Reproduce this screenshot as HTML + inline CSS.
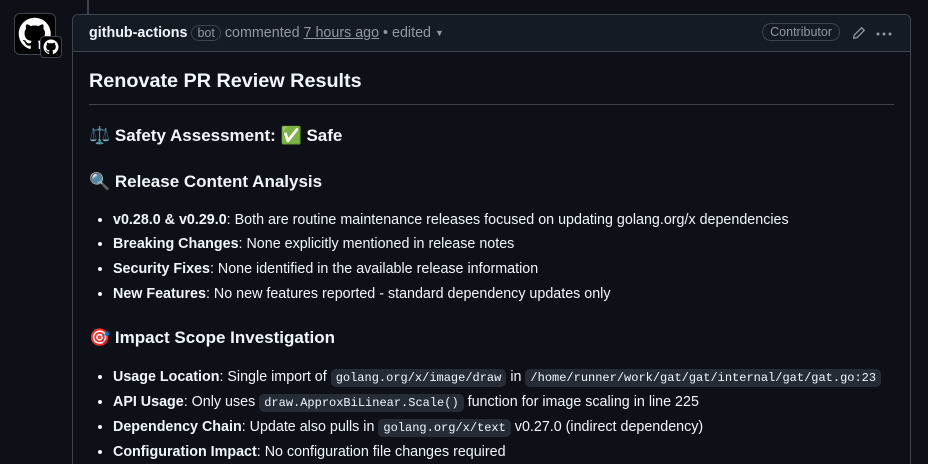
<!DOCTYPE html>
<html><head><style>
html,body{margin:0;height:464px;overflow:hidden}
body{background:#0d1117;width:928px;font-family:"Liberation Sans",sans-serif;color:#f0f6fc;position:relative}
.line{position:absolute;left:87px;top:0;width:2px;height:14px;background:#3d444d}
.av{position:absolute;left:14px;top:13px;width:40px;height:40px;background:#000;border:1px solid #3d444d;border-radius:6px}
.av2{position:absolute;left:40px;top:36px;width:20px;height:20px;background:#000;border:1px solid #3d444d;border-radius:4px}
.card{position:absolute;left:72px;top:14px;width:837px;height:460px;border:1px solid #3d444d;border-radius:6px;overflow:hidden}
.hd{height:36px;background:#151b23;border-bottom:1px solid #3d444d;display:flex;align-items:center;padding-left:16px;font-size:14.3px;color:#9198a1;white-space:nowrap}
.hd b{color:#f0f6fc}
.bot{border:1px solid #3d444d;border-radius:10px;padding:0 5px;font-size:12.5px;margin:0 4px}
.contrib{position:absolute;right:70px;top:8px;border:1px solid #3d444d;border-radius:10px;padding:1px 7px;font-size:12.5px;color:#9198a1}
.bd{padding:0 16px}
h1{font-size:19.8px;margin:0;padding:17px 0 9px;border-bottom:1px solid #3d444d;line-height:1.3}
h3{font-size:17px;margin:0;line-height:24px}
ul{margin:0;padding-left:24px;font-size:14.3px}
li{line-height:24.7px;height:24.7px;white-space:nowrap}
code{font-family:"Liberation Mono",monospace;font-size:12px;background:#262c36;border-radius:5px;padding:2px 5px;line-height:1}
</style></head><body>
<div class="line"></div>
<div class="av"><svg width="40" height="40" viewBox="0 0 16 16"><path fill="#fff" transform="translate(1.5 1.5) scale(0.8)" d="M8 0C3.58 0 0 3.58 0 8c0 3.54 2.29 6.53 5.47 7.59.4.07.55-.17.55-.38v-1.33c-2.23.48-2.7-1.07-2.7-1.07-.36-.92-.89-1.17-.89-1.17-.73-.5.06-.49.06-.49.8.06 1.23.83 1.23.83.71 1.22 1.87.87 2.33.66.07-.52.28-.87.5-1.07-1.78-.2-3.64-.89-3.64-3.95 0-.87.31-1.59.82-2.15-.08-.2-.36-1.02.08-2.12 0 0 .67-.21 2.2.82.64-.18 1.32-.27 2-.27.68 0 1.36.09 2 .27 1.53-1.04 2.2-.82 2.2-.82.44 1.1.16 1.920.08 2.12.51.56.82 1.27.82 2.15 0 3.07-1.87 3.75-3.65 3.95.29.25.54.73.54 1.48v2.2c0 .21.15.46.55.38A8.01 8.01 0 0016 8c0-4.42-3.58-8-8-8z"/></svg></div>
<div class="av2"><svg width="20" height="20" viewBox="0 0 16 16"><path fill="#fff" transform="translate(2 2) scale(0.75)" d="M8 0C3.58 0 0 3.58 0 8c0 3.54 2.29 6.53 5.47 7.59.4.07.55-.17.55-.38v-1.33c-2.23.48-2.7-1.07-2.7-1.07-.36-.92-.89-1.17-.89-1.17-.73-.5.06-.49.06-.49.8.06 1.23.83 1.23.83.71 1.22 1.87.87 2.33.66.07-.52.28-.87.5-1.07-1.78-.2-3.64-.89-3.64-3.95 0-.87.31-1.59.82-2.15-.08-.2-.36-1.02.08-2.12 0 0 .67-.21 2.2.82.64-.18 1.32-.27 2-.27.68 0 1.36.09 2 .27 1.53-1.04 2.2-.82 2.2-.82.44 1.1.16 1.92.08 2.12.51.56.82 1.27.82 2.15 0 3.07-1.87 3.75-3.65 3.95.29.25.54.73.54 1.48v2.2c0 .21.15.46.55.38A8.01 8.01 0 0016 8c0-4.42-3.58-8-8-8z"/></svg></div>
<div class="card">
<div class="hd"><b>github-actions</b><span class="bot">bot</span>commented&nbsp;<span style="text-decoration:underline">7 hours ago</span>&nbsp;• edited&nbsp;<span style="font-size:9px">▼</span>
<span class="contrib">Contributor</span>
<svg style="position:absolute;right:44px;top:11px" width="14" height="14" viewBox="0 0 16 16"><path fill="none" stroke="#9198a1" stroke-width="1.5" d="M11 2l3 3-8.5 8.5L2 14l.5-3.5z"/></svg>
<svg style="position:absolute;right:18px;top:17px" width="16" height="4"><circle cx="2" cy="2" r="1.5" fill="#9198a1"/><circle cx="8" cy="2" r="1.5" fill="#9198a1"/><circle cx="14" cy="2" r="1.5" fill="#9198a1"/></svg>
</div>
<div class="bd">
<h1>Renovate PR Review Results</h1>
<h3 style="margin-top:19px">⚖️ Safety Assessment: <span style="color:#3fb950">✅</span> Safe</h3>
<h3 style="margin-top:22px">🔍 Release Content Analysis</h3>
<ul style="margin-top:14px">
<li><b>v0.28.0 &amp; v0.29.0</b>: Both are routine maintenance releases focused on updating golang.org/x dependencies</li>
<li><b>Breaking Changes</b>: None explicitly mentioned in release notes</li>
<li><b>Security Fixes</b>: None identified in the available release information</li>
<li><b>New Features</b>: No new features reported - standard dependency updates only</li>
</ul>
<h3 style="margin-top:20px">🎯 Impact Scope Investigation</h3>
<ul style="margin-top:15px">
<li><b>Usage Location</b>: Single import of <code>golang.org/x/image/draw</code> in <code>/home/runner/work/gat/gat/internal/gat/gat.go:23</code></li>
<li><b>API Usage</b>: Only uses <code>draw.ApproxBiLinear.Scale()</code> function for image scaling in line 225</li>
<li><b>Dependency Chain</b>: Update also pulls in <code>golang.org/x/text</code> v0.27.0 (indirect dependency)</li>
<li><b>Configuration Impact</b>: No configuration file changes required</li>
</ul>
</div></div>
</body></html>
